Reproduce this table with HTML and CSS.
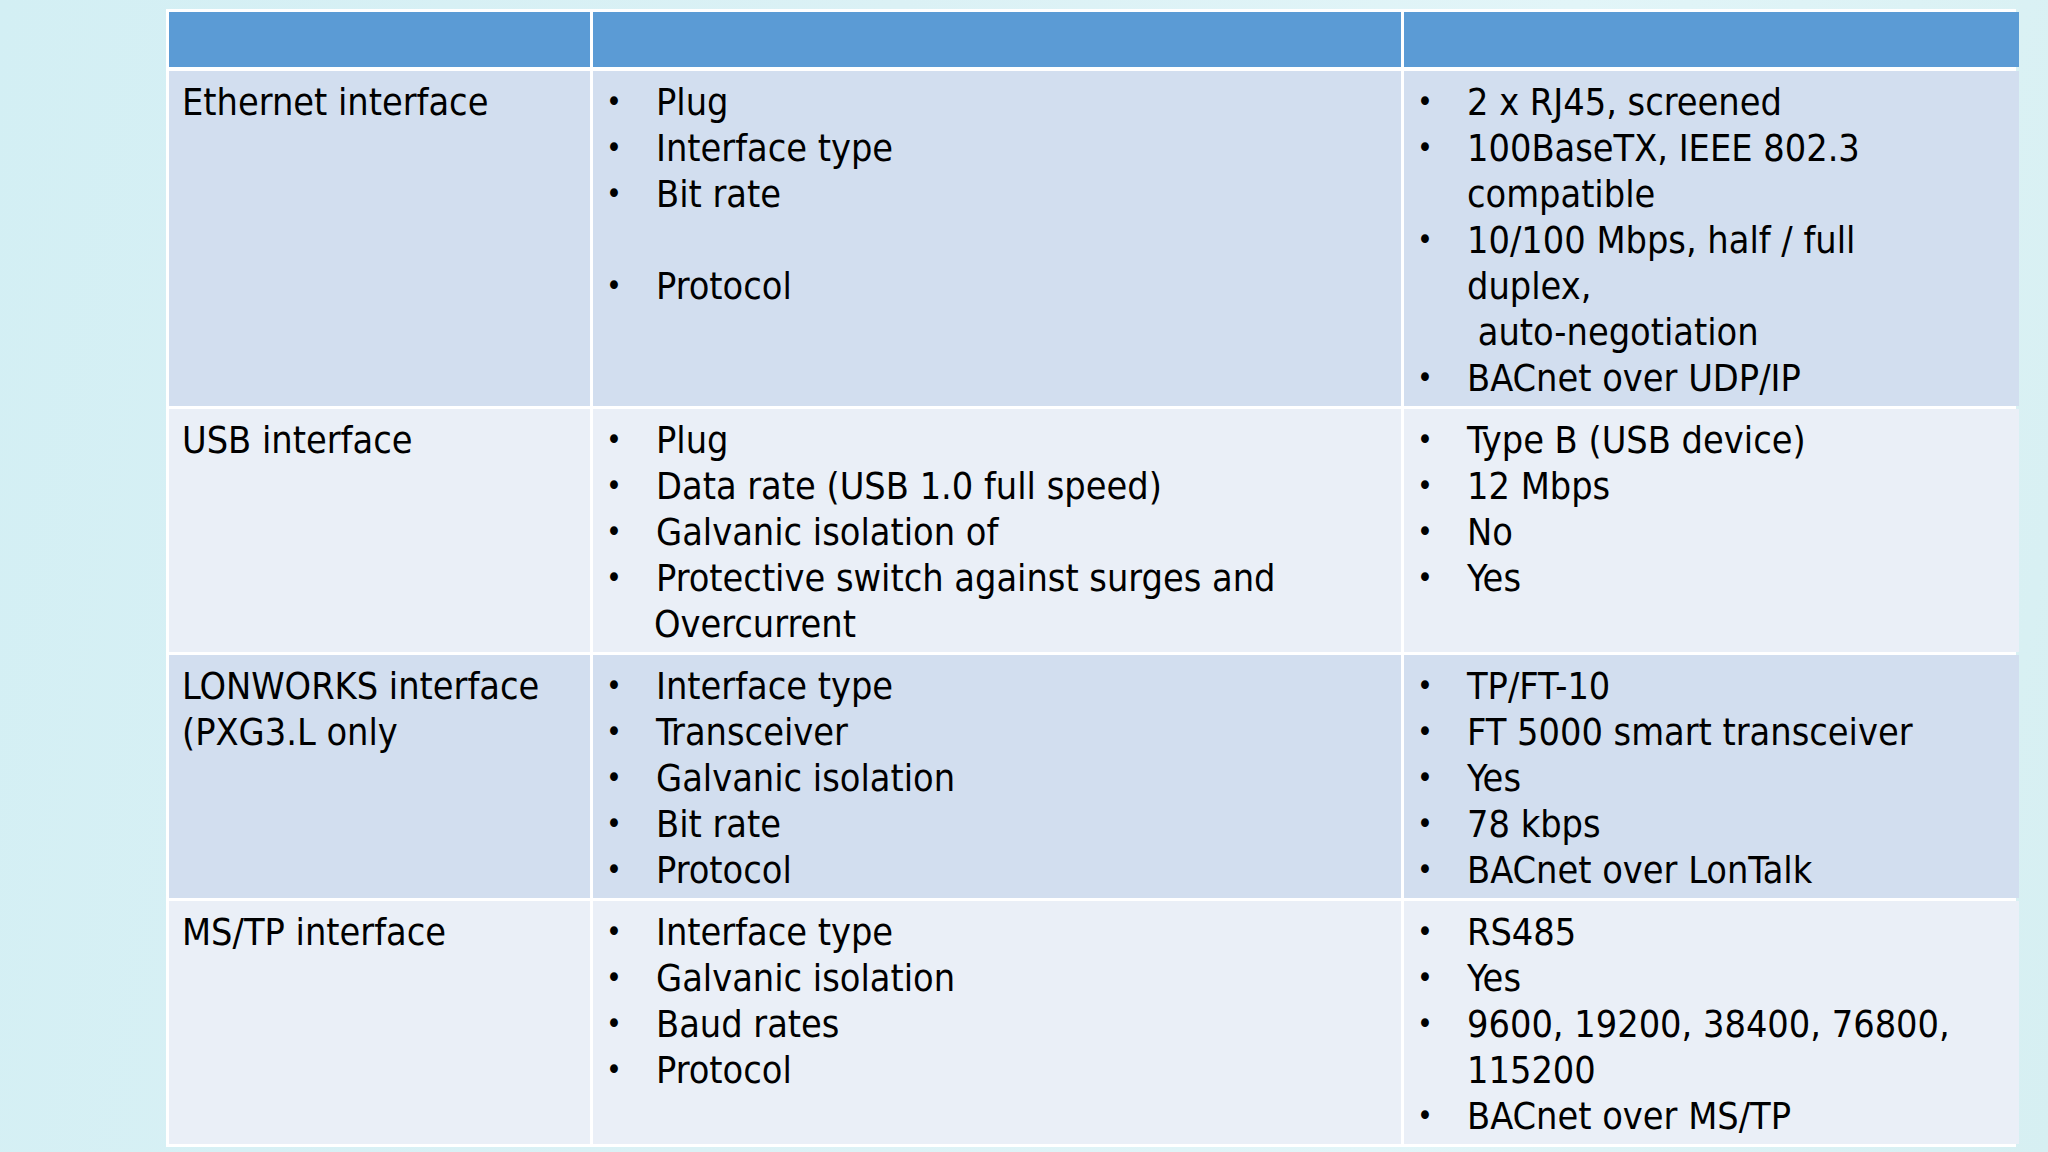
FILE: index.html
```html
<!DOCTYPE html>
<html lang="en">
<head>
<meta charset="utf-8">
<title>PXG3 interfaces</title>
<link rel="stylesheet" href="styles.css">
</head>
<body>
<div class="slide">
  <div class="table">
    <div class="cell head"></div>
    <div class="cell head"></div>
    <div class="cell head"></div>

    <div class="cell odd name">Ethernet interface</div>
    <div class="cell odd">
      <ul class="list">
        <li><span class="dot">•</span><span>Plug</span></li>
        <li><span class="dot">•</span><span>Interface type</span></li>
        <li><span class="dot">•</span><span>Bit rate</span></li>
        <li class="blank"><span class="dot"></span><span>&nbsp;</span></li>
        <li><span class="dot">•</span><span>Protocol</span></li>
      </ul>
    </div>
    <div class="cell odd">
      <ul class="list">
        <li><span class="dot">•</span><span>2 x RJ45, screened</span></li>
        <li><span class="dot">•</span><span>100BaseTX, IEEE 802.3<br>compatible</span></li>
        <li><span class="dot">•</span><span>10/100 Mbps, half / full<br>duplex,<br>&nbsp;auto-negotiation</span></li>
        <li><span class="dot">•</span><span>BACnet over UDP/IP</span></li>
      </ul>
    </div>

    <div class="cell even name">USB interface</div>
    <div class="cell even">
      <ul class="list">
        <li><span class="dot">•</span><span>Plug</span></li>
        <li><span class="dot">•</span><span>Data rate (USB 1.0 full speed)</span></li>
        <li><span class="dot">•</span><span>Galvanic isolation of</span></li>
        <li><span class="dot">•</span><span>Protective switch against surges and<br><span class="outdent">Overcurrent</span></span></li>
      </ul>
    </div>
    <div class="cell even">
      <ul class="list">
        <li><span class="dot">•</span><span>Type B (USB device)</span></li>
        <li><span class="dot">•</span><span>12 Mbps</span></li>
        <li><span class="dot">•</span><span>No</span></li>
        <li><span class="dot">•</span><span>Yes</span></li>
      </ul>
    </div>

    <div class="cell odd name">LONWORKS interface<br>(PXG3.L only</div>
    <div class="cell odd">
      <ul class="list">
        <li><span class="dot">•</span><span>Interface type</span></li>
        <li><span class="dot">•</span><span>Transceiver</span></li>
        <li><span class="dot">•</span><span>Galvanic isolation</span></li>
        <li><span class="dot">•</span><span>Bit rate</span></li>
        <li><span class="dot">•</span><span>Protocol</span></li>
      </ul>
    </div>
    <div class="cell odd">
      <ul class="list">
        <li><span class="dot">•</span><span>TP/FT-10</span></li>
        <li><span class="dot">•</span><span>FT 5000 smart transceiver</span></li>
        <li><span class="dot">•</span><span>Yes</span></li>
        <li><span class="dot">•</span><span>78 kbps</span></li>
        <li><span class="dot">•</span><span>BACnet over LonTalk</span></li>
      </ul>
    </div>

    <div class="cell even name">MS/TP interface</div>
    <div class="cell even">
      <ul class="list">
        <li><span class="dot">•</span><span>Interface type</span></li>
        <li><span class="dot">•</span><span>Galvanic isolation</span></li>
        <li><span class="dot">•</span><span>Baud rates</span></li>
        <li><span class="dot">•</span><span>Protocol</span></li>
      </ul>
    </div>
    <div class="cell even">
      <ul class="list">
        <li><span class="dot">•</span><span>RS485</span></li>
        <li><span class="dot">•</span><span>Yes</span></li>
        <li><span class="dot">•</span><span>9600, 19200, 38400, 76800,<br>115200</span></li>
        <li><span class="dot">•</span><span>BACnet over MS/TP</span></li>
      </ul>
    </div>
  </div>
</div>
</body>
</html>
```
FILE: styles.css
```css
html, body {
  margin: 0;
  padding: 0;
}

body {
  width: 2048px;
  height: 1152px;
  overflow: hidden;
  background: linear-gradient(100deg, #d3eff4 0%, #dbf1f5 40%, #e2f5f8 70%, #d6eff2 100%);
  font-family: "DejaVu Sans Condensed", "Liberation Sans Narrow", "DejaVu Sans", sans-serif;
  font-stretch: condensed;
  color: #000000;
}

.slide {
  padding: 9px 0 0 166px;
}

.table {
  display: grid;
  grid-template-columns: 421px 808px 615px;
  grid-template-rows: 56px auto auto auto auto;
  gap: 3px;
  padding: 3px;
  width: 1850px;
  background: #ffffff;
  box-sizing: border-box;
}

.cell {
  font-size: 37.5px;
  line-height: 46px;
  padding: 8px 12px 5px 14px;
  white-space: nowrap;
}

.head {
  background: #5b9bd5;
  padding: 0;
  margin-bottom: 1px;
}

.odd {
  background: #d2deef;
}

.even {
  background: #eaeff7;
}

.name {
  padding-left: 13px;
}

.list {
  list-style: none;
  margin: 0 0 0 -2px;
  padding: 0;
}

.list li {
  display: grid;
  grid-template-columns: 51px 1fr;
}

.dot {
  font-size: 30px;
  padding-left: 1px;
}

.outdent {
  margin-left: -2px;
}
```
